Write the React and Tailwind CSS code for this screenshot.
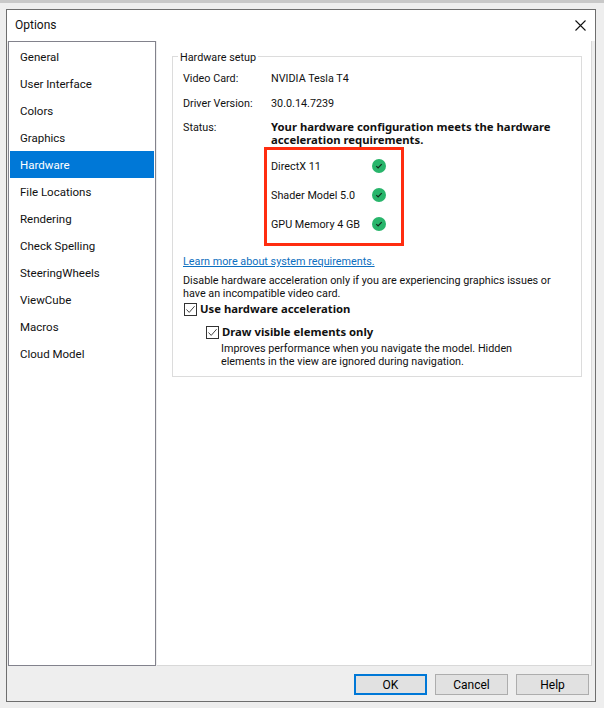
import React from "react";

const navItems = [
  "General",
  "User Interface",
  "Colors",
  "Graphics",
  "Hardware",
  "File Locations",
  "Rendering",
  "Check Spelling",
  "SteeringWheels",
  "ViewCube",
  "Macros",
  "Cloud Model",
];

const requirements = ["DirectX 11", "Shader Model 5.0", "GPU Memory 4 GB"];

const CheckDot = () => (
  <svg width="14" height="14" viewBox="0 0 14 14" className="shrink-0 mb-[3px]">
    <circle cx="7" cy="7" r="7" fill="#28b56b" />
    <path d="M4.3 7.2 6.1 9 9.7 5.1" fill="none" stroke="#12281c" strokeWidth="1.2" />
  </svg>
);

const CheckBox = () => (
  <svg width="13" height="13" viewBox="0 0 13 13" className="shrink-0">
    <rect x="0.5" y="0.5" width="12" height="12" fill="#fff" stroke="#333" />
    <path d="M2.5 6.5 5.2 9.4 10.6 3.2" fill="none" stroke="#444" strokeWidth="1" />
  </svg>
);

const FooterButton = ({ label, primary }) => (
  <button
    className={
      primary
        ? "w-[73px] h-[21px] bg-[#e1e1e1] border-2 border-[#0078d7] text-[12px] text-black"
        : "w-[73px] h-[21px] bg-[#e1e1e1] border border-[#adadad] text-[12px] text-black"
    }
  >
    {label}
  </button>
);

const App = () => {
  return (
    <div className="w-[604px] h-[708px] bg-[#eeeeee] overflow-hidden font-['Roboto','Noto_Sans',sans-serif] text-[11.5px] text-[#111]">
      <div className="h-[3px] bg-[#c8c8c8]" />
      <div className="mt-[6px] ml-[6px] w-[590px] h-[693px] border border-[#6e6e6e] flex flex-col bg-[#eeeeee]">
        {/* title bar */}
        <div className="h-[31px] shrink-0 bg-white flex items-center justify-between pl-[8px] pr-[9px] pb-[1px]">
          <span className="text-[12px]">Options</span>
          <svg width="11" height="11" viewBox="0 0 11 11">
            <path d="M0.5 0.5 10.5 10.5 M10.5 0.5 0.5 10.5" stroke="#111" strokeWidth="1.1" />
          </svg>
        </div>

        <div className="flex h-[625px] shrink-0 pl-[1px] pr-[3px]">
          {/* left list */}
          <div className="w-[148px] h-[625px] bg-white border border-[#82828c] py-[1px] px-[1px]">
            {navItems.map((item) => (
              <div
                key={item}
                className={
                  item === "Hardware"
                    ? "h-[27px] pl-[10px] pt-[2px] flex items-center bg-[#0078d7] text-white"
                    : "h-[27px] pl-[10px] pt-[2px] flex items-center"
                }
              >
                {item}
              </div>
            ))}
          </div>

          {/* right panel */}
          <div className="ml-[1px] flex-1 bg-white border-b border-r border-[#d8d8d8] pl-[15px] pr-[9px] pt-[8px] text-[10.8px]">
            <fieldset className="h-[328px] border border-[#dcdcdc]">
              <legend className="ml-[5px] px-[2px] leading-[14px] translate-y-[2px]">Hardware setup</legend>
              <div className="pl-[10px] pr-[10px]">
                <div className="grid grid-cols-[88px_1fr] pt-[4px]">
                  <div className="h-[25px] flex items-center">Video Card:</div>
                  <div className="h-[25px] flex items-center">NVIDIA Tesla T4</div>
                  <div className="h-[24px] flex items-center">Driver Version:</div>
                  <div className="h-[24px] flex items-center">30.0.14.7239</div>
                  <div className="h-[24px] flex items-center">Status:</div>
                  <div className="pt-[4px] font-['Noto_Sans',sans-serif] text-[11.3px] font-bold leading-[13px]">
                    Your hardware configuration meets the hardware acceleration requirements.
                  </div>
                </div>

                {/* highlighted requirements */}
                <div className="mt-[1px] ml-[81px] w-[140px] h-[99px] border-[3px] border-[#ff2d10] pt-[3px] pl-[4px]">
                  {requirements.map((req) => (
                    <div key={req} className="h-[29px] flex items-center">
                      <span className="w-[101px]">{req}</span>
                      <CheckDot />
                    </div>
                  ))}
                </div>

                <div className="mt-[9px] text-[#0d6fc0] underline leading-[14px]">
                  Learn more about system requirements.
                </div>
                <p className="mt-[5px] w-[375px] leading-[13px]">
                  Disable hardware acceleration only if you are experiencing graphics issues or have
                  an incompatible video card.
                </p>
                <div className="mt-[1px] ml-[1px] flex items-center gap-[3px] h-[16px] font-['Noto_Sans',sans-serif] text-[11.3px] font-bold">
                  <CheckBox />
                  <span>Use hardware acceleration</span>
                </div>
                <div className="mt-[7px] ml-[23px] flex items-center gap-[3px] h-[16px] font-['Noto_Sans',sans-serif] text-[11.3px] font-bold">
                  <CheckBox />
                  <span>Draw visible elements only</span>
                </div>
                <p className="mt-[2px] ml-[38px] w-[310px] leading-[13px]">
                  Improves performance when you navigate the model. Hidden elements in the view are
                  ignored during navigation.
                </p>
              </div>
            </fieldset>
          </div>
        </div>

        {/* footer buttons */}
        <div className="flex justify-end gap-[8px] pt-[8px] pr-[6px]">
          <FooterButton label="OK" primary />
          <FooterButton label="Cancel" />
          <FooterButton label="Help" />
        </div>
      </div>
    </div>
  );
};

export default App;
